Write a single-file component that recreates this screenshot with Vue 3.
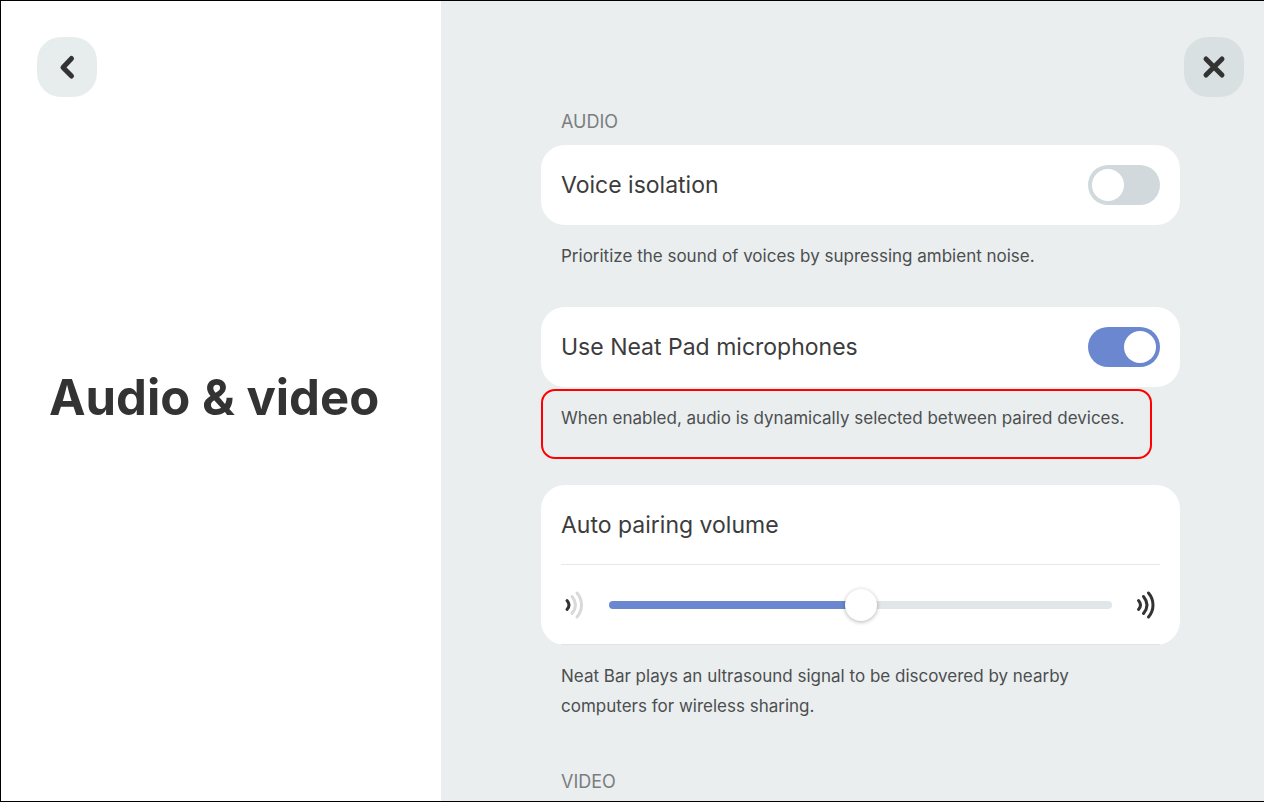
<script setup>
import { ref } from 'vue'

const voiceIsolation = ref(false)
const padMicrophones = ref(true)
const volume = ref(50)
</script>

<template>
  <div class="screen">
    <aside class="side">
      <button class="icon-button back" type="button" aria-label="Back">
        <svg viewBox="0 0 60 60" aria-hidden="true">
          <path d="M34.5 21.5 26 30.5l8.500 8.500" />
        </svg>
      </button>
      <div class="title-area">
        <h1>Audio &amp; video</h1>
      </div>
    </aside>

    <main class="panel">
      <div class="settings">
        <h2>AUDIO</h2>

        <div class="card row">
          <label for="voice">Voice isolation</label>
          <input id="voice" v-model="voiceIsolation" class="switch" type="checkbox" role="switch" />
        </div>
        <p class="hint">Prioritize the sound of voices by supressing ambient noise.</p>

        <div class="card row">
          <label for="mics">Use Neat Pad microphones</label>
          <input id="mics" v-model="padMicrophones" class="switch" type="checkbox" role="switch" />
        </div>
        <p class="hint marked">When enabled, audio is dynamically selected between paired devices.</p>

        <div class="card stacked">
          <div class="card-head">
            <label for="volume">Auto pairing volume</label>
          </div>
          <div class="volume">
            <svg class="waves low" viewBox="0 0 24 32" aria-hidden="true">
              <path d="M6 11.5q4 4.5 0 9" />
              <path d="M11 7.5q7 8.5 0 17" />
              <path d="M16 4c6 7 6 17 0 24" />
            </svg>
            <input
              id="volume"
              v-model="volume"
              type="range"
              min="0"
              max="100"
              :style="{ '--fill': volume + '%' }"
            />
            <svg class="waves" viewBox="0 0 24 32" aria-hidden="true">
              <path d="M6.5 11.5q4 4.5 0 9" />
              <path d="M11.5 7.5q7 8.5 0 17" />
              <path d="M16.5 4c6 7 6 17 0 24" />
            </svg>
          </div>
        </div>
        <p class="hint last">
          Neat Bar plays an ultrasound signal to be discovered by nearby computers for wireless sharing.
        </p>

        <h2>VIDEO</h2>
      </div>

      <button class="icon-button close" type="button" aria-label="Close">
        <svg viewBox="0 0 60 60" aria-hidden="true">
          <path d="M22 22l16 16M38 22 22 38" />
        </svg>
      </button>
    </main>
  </div>
</template>

<style>
body {
  margin: 0;
}
</style>

<style scoped>
.screen {
  box-sizing: border-box;
  min-height: 100vh;
  display: grid;
  grid-template-columns: minmax(0, 440fr) minmax(0, 823fr);
  border: 1px solid #000;
  border-right: 0;
  background: #fff;
  color: #333;
  font-family: Inter, "Liberation Sans", sans-serif;
}

.side {
  display: flex;
  flex-direction: column;
  padding: 36px 36px 0;
}

.title-area {
  flex: 1;
  display: flex;
  align-items: center;
  padding: 0 0 102px 12px;
}

h1 {
  margin: 0;
  font-size: 49px;
  line-height: 60px;
  font-weight: 700;
  white-space: nowrap;
}

.icon-button {
  flex: none;
  width: 60px;
  height: 60px;
  padding: 0;
  border: 0;
  border-radius: 24px;
  cursor: pointer;
}

.icon-button svg {
  display: block;
  width: 60px;
  height: 60px;
  fill: none;
  stroke: #333;
  stroke-width: 5;
  stroke-linecap: round;
  stroke-linejoin: round;
}

.back {
  background: #e7eded;
}

.close {
  background: #d8e0e2;
}

.panel {
  display: flex;
  align-items: flex-start;
  gap: 4px;
  padding: 36px 20px 0 100px;
  background: #eaeeef;
}

.settings {
  flex: 1;
  min-width: 0;
  padding-top: 73px;
}

h2 {
  margin: 0 20px 11px;
  font-size: 18px;
  line-height: 24px;
  font-weight: 400;
  color: #7b7d7e;
}

h2:last-child {
  margin-bottom: 0;
}

.card {
  border-radius: 24px;
  background: #fff;
  font-size: 23px;
  line-height: 32px;
  color: #3c3c3c;
}

.row {
  display: flex;
  align-items: center;
  justify-content: space-between;
  padding: 20px;
}

.hint {
  margin: 16px 20px 36px;
  font-size: 17px;
  line-height: 30px;
  color: #4c4e4f;
}

.marked {
  width: fit-content;
  margin: 2px 0 26px;
  padding: 12px 26px 24px 18px;
  border: 2px solid #f00;
  border-radius: 14px;
}

.last {
  max-width: 540px;
  margin-bottom: 49px;
}

.switch {
  appearance: none;
  flex: none;
  width: 72px;
  height: 40px;
  margin: 0;
  padding: 4px;
  border-radius: 20px;
  background: #d1d9dc;
  cursor: pointer;
}

.switch::before {
  content: "";
  display: block;
  width: 32px;
  height: 32px;
  border-radius: 50%;
  background: #fff;
}

.switch:checked {
  background: #6a87d0;
}

.switch:checked::before {
  margin-left: auto;
}

.stacked {
  padding: 0 20px;
}

.card-head {
  padding: 24px 0 23px;
  border-bottom: 1px solid #e6e8e9;
}

.volume {
  display: flex;
  align-items: center;
  padding: 24px 4px 23px 0;
  border-bottom: 1px solid #e1e3e4;
}

.waves {
  flex: none;
  width: 24px;
  height: 32px;
  fill: none;
  stroke: #333;
  stroke-width: 3;
  stroke-linecap: round;
}

.low path + path {
  stroke: #d9d9d9;
}

input[type="range"] {
  appearance: none;
  flex: 1;
  min-width: 0;
  height: 32px;
  margin: 0 20px 0 24px;
  background: transparent;
  cursor: pointer;
}

input[type="range"]::-webkit-slider-runnable-track {
  height: 8px;
  border-radius: 4px;
  background: linear-gradient(to right, #6a87d0 var(--fill), #e1e6e9 var(--fill));
}

input[type="range"]::-webkit-slider-thumb {
  appearance: none;
  width: 32px;
  height: 32px;
  margin-top: -12px;
  border-radius: 50%;
  background: #fff;
  box-shadow: 0 1px 4px rgba(0, 0, 0, 0.3);
}
</style>
